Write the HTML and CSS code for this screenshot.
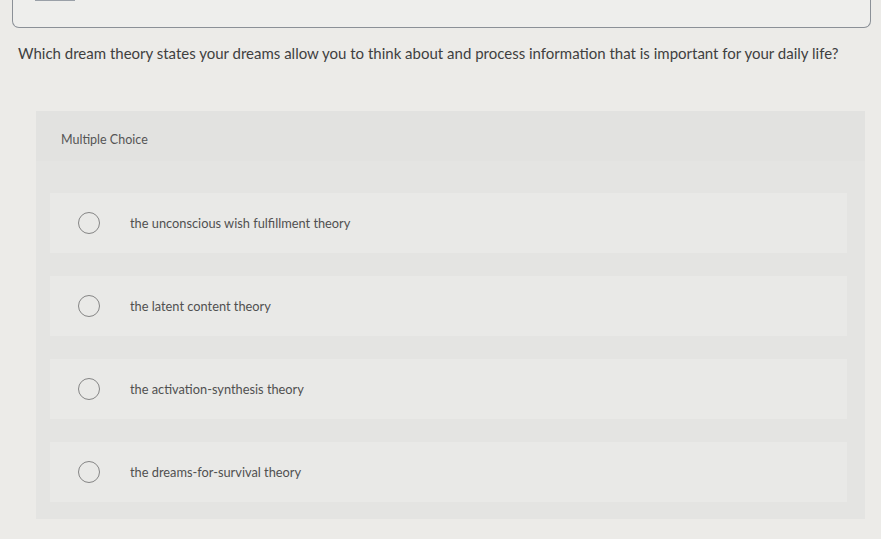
FILE: index.html
```html
<!DOCTYPE html>
<html>
<head>
<meta charset="utf-8">
<link rel="stylesheet" href="styles.css">
</head>
<body>
<div class="topbox"><span class="tab"></span></div>
<p class="question">Which dream theory states your dreams allow you to think about and process information that is important for your daily life?</p>
<section class="panel">
  <div class="panel-head">Multiple Choice</div>
  <div class="options">
    <label class="option"><span class="radio"></span><span class="text">the unconscious wish fulfillment theory</span></label>
    <label class="option"><span class="radio"></span><span class="text">the latent content theory</span></label>
    <label class="option"><span class="radio"></span><span class="text">the activation-synthesis theory</span></label>
    <label class="option"><span class="radio"></span><span class="text">the dreams-for-survival theory</span></label>
  </div>
</section>
</body>
</html>
```
FILE: styles.css
```css
html, body {
  margin: 0;
  padding: 0;
}
body {
  width: 881px;
  height: 539px;
  overflow: hidden;
  background: #ecebe8;
  font-family: Lato, "Open Sans", sans-serif;
  color: #4a4a4a;
}
.topbox {
  margin: -20px 10px 0 12px;
  height: 47px;
  border: 1px solid #8b9097;
  border-top: none;
  border-radius: 0 0 7px 7px;
  background: #eeeeec;
  position: relative;
}
.tab {
  position: absolute;
  left: 22px;
  top: 19px;
  width: 40px;
  height: 2px;
  background: #9aa0a8;
}
.question {
  margin: 14px 0 0 18px;
  font-size: 15px;
  line-height: 22px;
  color: #3f3f3f;
}
.panel {
  margin: 47px 16px 0 36px;
  background: #e4e4e2;
  padding-bottom: 17px;
}
.panel-head {
  height: 50px;
  padding: 6px 0 0 25px;
  box-sizing: border-box;
  display: flex;
  align-items: center;
  font-size: 12.5px;
  color: #555;
  background: #e2e2e0;
}
.options {
  display: flex;
  flex-direction: column;
  gap: 23px;
  padding: 32px 18px 0 14px;
}
.option {
  height: 60px;
  display: flex;
  align-items: center;
  background: #e9e9e7;
}
.radio {
  width: 22px;
  height: 22px;
  border: 1.5px solid #858585;
  border-radius: 50%;
  margin-left: 28px;
  box-sizing: border-box;
  flex: none;
}
.text {
  margin-left: 30px;
  font-size: 12.8px;
  color: #505050;
}
```
